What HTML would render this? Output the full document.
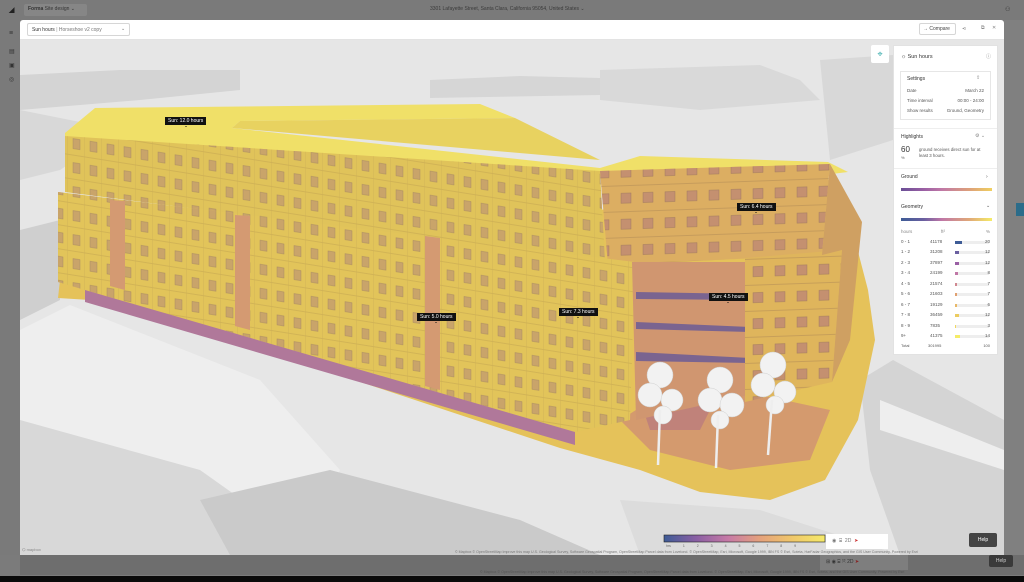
<!DOCTYPE html>
<html><head><meta charset="utf-8"><style>
*{margin:0;padding:0;box-sizing:border-box}
body{width:1024px;height:582px;overflow:hidden;background:#7b7b7b;font-family:"Liberation Sans",sans-serif;position:relative}
.abs{position:absolute}
.t{font-size:5px;color:#555;white-space:nowrap}
.lbl{position:absolute;background:#111;color:#fff;font-size:5px;padding:1px 3px;white-space:nowrap}
.lbl:after{content:"";position:absolute;left:50%;bottom:-2px;margin-left:-1px;border:1.5px solid transparent;border-top-color:#111;border-bottom:0}
#panel{left:893px;top:45px;width:105px;height:310px;background:#fff;border:1px solid #e2e2e2}
.row{position:absolute;left:7px;right:7px;height:9px;font-size:4.5px;color:#555}
.row span{position:absolute;top:0}
.bar{position:absolute;left:54px;top:2px;width:34px;height:3px;background:#eee}
.bar i{display:block;height:3px}
</style></head><body>
<div class="abs" style="left:0;top:0;width:1024px;height:20px;background:#7a7a7a"></div>
<div class="abs t" style="left:9px;top:6px;font-size:7px;color:#222;font-weight:bold">◢</div>
<div class="abs" style="left:24px;top:4px;width:63px;height:12px;background:#868686;border-radius:2px"></div>
<div class="abs t" style="left:28px;top:6px;color:#333;font-size:5px"><b>Forma</b> Site design ⌄</div>
<div class="abs t" style="left:430px;top:6px;color:#3a3a3a;font-size:5px">3301 Lafayette Street, Santa Clara, California 95054, United States ⌄</div>
<div class="abs t" style="left:1005px;top:6px;color:#333;font-size:6px">⚇</div>
<div class="abs" style="left:0;top:20px;width:20px;height:535px;background:#7a7a7a"></div>
<div class="abs t" style="left:9px;top:30px;color:#333;font-size:7px">≡</div>
<div class="abs t" style="left:9px;top:48px;color:#333;font-size:6px">▤</div>
<div class="abs t" style="left:9px;top:62px;color:#333;font-size:6px">▣</div>
<div class="abs t" style="left:9px;top:76px;color:#333;font-size:6px">◎</div>
<div class="abs" style="left:1004px;top:20px;width:20px;height:535px;background:#808080"></div>
<div class="abs" style="left:1016px;top:203px;width:8px;height:13px;background:#2b6c8a"></div>
<div class="abs" style="left:20px;top:20px;width:984px;height:20px;background:#fff;border-bottom:1px solid #e3e3e3;border-radius:3px 3px 0 0"></div>
<div class="abs" style="left:27px;top:23px;width:103px;height:13px;border:1px solid #d6d6d6;border-radius:2px"></div>
<div class="abs t" style="left:32px;top:27px;color:#333">Sun hours <span style="color:#999">|</span> <span style="color:#777">Horseshoe v2 copy</span></div>
<div class="abs t" style="left:121px;top:26px;color:#777">⌄</div>
<div class="abs" style="left:919px;top:23px;width:37px;height:12px;border:1px solid #d6d6d6;border-radius:2px"></div>
<div class="abs t" style="left:923px;top:26px;color:#444">→ Compare</div>
<div class="abs t" style="left:962px;top:26px;color:#666">⋖</div>
<div class="abs t" style="left:981px;top:25px;color:#888">⧉</div>
<div class="abs t" style="left:992px;top:25px;color:#888">✕</div>
<svg class="abs" style="left:0;top:0" width="1024" height="582" viewBox="0 0 1024 582">
<defs>
<clipPath id="c"><rect x="20" y="40" width="984" height="515"/></clipPath>
<pattern id="w" width="17" height="24" patternUnits="userSpaceOnUse" patternTransform="skewY(9)">
<rect x="5" y="7" width="7" height="10" fill="#c9a46a" stroke="#a88a62" stroke-width=".5"/><line x1="0" y1="23.5" x2="17" y2="23.5" stroke="#c2a452" stroke-width=".5"/><line x1="16.5" y1="0" x2="16.5" y2="24" stroke="#ccb055" stroke-width=".4"/>
</pattern>
<pattern id="w2" width="22" height="26" patternUnits="userSpaceOnUse" patternTransform="skewY(-2)">
<rect x="5" y="7" width="10" height="10" fill="#c49070" stroke="#a07a60" stroke-width=".5"/><line x1="0" y1="25.5" x2="22" y2="25.5" stroke="#b08a55" stroke-width=".5"/>
</pattern>
</defs>
<g clip-path="url(#c)">
<rect x="20" y="40" width="984" height="515" fill="#e6e6e6"/>
<polygon points="20,75 120,70 240,70 240,90 140,100 20,110" fill="#d4d4d4"/>
<polygon points="430,80 520,76 600,78 600,95 430,98" fill="#d6d6d6"/>
<polygon points="600,70 760,65 800,80 820,100 700,110 600,100" fill="#d9d9d9"/>
<polygon points="820,60 893,55 893,140 830,160" fill="#d8d8d8"/>
<polygon points="20,110 120,130 60,170 20,180" fill="#d8d8d8"/>
<polygon points="20,230 60,220 60,300 20,320" fill="#cfcfcf"/>
<polygon points="20,330 70,305 260,380 340,470 300,555 20,555" fill="#eeeeee"/>
<polygon points="20,420 200,470 320,555 20,555" fill="#d8d8d8"/>
<polygon points="200,500 330,470 520,520 600,555 230,555" fill="#cacaca"/>
<polygon points="860,380 893,360 1004,420 1004,555 900,555 870,470" fill="#d4d4d4"/>
<polygon points="880,400 1004,450 1004,470 880,430" fill="#eeeeee"/>
<polygon points="620,500 760,510 900,555 640,555" fill="#dcdcdc"/>
<polygon points="58,298 90,300 300,362 560,448 640,470 700,492 770,500 825,480 858,420 875,340 868,290 855,240 840,200 830,180 60,280" fill="#e5c25a"/>
<polygon points="620,420 660,395 760,395 830,410 810,460 730,470 650,450" fill="#d49a6e"/>
<polygon points="640,400 720,390 700,430 650,430" fill="#c0827a"/>
<polygon points="65,133 95,108 480,104 515,118 240,121 232,128 600,168 640,156 828,162 848,172 815,176 640,176 600,176 65,140" fill="#f0e068"/>
<polygon points="240,121 515,118 600,160 232,128" fill="#e8d260"/>
<polygon points="65,136 600,171 605,262 65,192" fill="#e0c35a"/>
<polygon points="65,136 600,171 605,262 65,192" fill="url(#w)"/>
<polygon points="600,171 830,164 822,255 608,265" fill="#dcae62"/>
<polygon points="600,171 830,164 822,255 608,265" fill="url(#w2)"/>
<polygon points="58,192 635,262 630,420 575,432 85,290 58,282" fill="#e2c45a"/>
<polygon points="58,192 635,262 630,420 575,432 85,290 58,282" fill="url(#w)"/>
<polygon points="110,200 125,201 125,290 110,286" fill="#d49a72"/>
<polygon points="235,215 250,216 250,330 235,326" fill="#d49a72"/>
<polygon points="425,236 440,238 440,390 425,386" fill="#d49a72"/>
<polygon points="85,290 575,432 575,445 85,302" fill="#b0789a"/>
<polygon points="632,262 752,262 748,395 636,420" fill="#d09670"/>
<polygon points="636,292 750,294 750,300 636,299" fill="#7a6490"/>
<polygon points="636,322 750,327 750,332 636,329" fill="#7a6490"/>
<polygon points="636,352 750,358 750,363 636,361" fill="#7a6490"/>
<polygon points="745,258 842,250 832,382 745,402" fill="#dfb55c"/>
<polygon points="745,258 842,250 832,382 745,402" fill="url(#w2)"/>
<polygon points="830,164 862,222 850,340 832,382 842,250 822,255" fill="#cfa062"/>
<g fill="#f2f2f2" stroke="#cfcfcf" stroke-width=".5">
<circle cx="660" cy="375" r="13"/><circle cx="650" cy="395" r="12"/><circle cx="672" cy="400" r="11"/><circle cx="663" cy="415" r="9"/>
<circle cx="720" cy="380" r="13"/><circle cx="710" cy="400" r="12"/><circle cx="732" cy="405" r="12"/><circle cx="720" cy="420" r="9"/>
<circle cx="773" cy="365" r="13"/><circle cx="763" cy="385" r="12"/><circle cx="785" cy="392" r="11"/><circle cx="775" cy="405" r="9"/>
</g>
<g stroke="#eee" stroke-width="2.5"><line x1="660" y1="410" x2="658" y2="465"/><line x1="718" y1="415" x2="716" y2="468"/><line x1="772" y1="400" x2="768" y2="455"/></g>
</g>
<defs><linearGradient id="lg"><stop offset="0" stop-color="#3e5c96"/><stop offset=".2" stop-color="#8a5fa4"/><stop offset=".4" stop-color="#c77aa6"/><stop offset=".6" stop-color="#e5a27c"/><stop offset=".8" stop-color="#f0c86a"/><stop offset="1" stop-color="#f5ea6a"/></linearGradient></defs>
<rect x="664" y="535" width="161" height="7" fill="url(#lg)" stroke="#222" stroke-width=".6"/>
<rect x="826" y="534" width="62" height="15" fill="#fff"/>
</svg>
<div class="abs t" style="left:666px;top:544px;font-size:3.5px;color:#666;word-spacing:11px">hrs 1 2 3 4 5 6 7 8 9</div>
<div class="abs t" style="left:832px;top:538px;color:#777;font-size:5px">◉ &nbsp;⌸ &nbsp;2D &nbsp;<span style="color:#c33">➤</span></div>
<div class="abs" style="left:969px;top:533px;width:28px;height:14px;background:#444;border-radius:2px;color:#fff;font-size:5px;text-align:center;line-height:14px">Help</div>
<div class="abs t" style="left:22px;top:547px;color:#888;font-size:4px">⌬ mapbox</div>
<div class="abs t" style="left:455px;top:550px;color:#777;font-size:3.6px">© Mapbox © OpenStreetMap Improve this map U.S. Geological Survey, Software Geospatial Program, OpenStreetMap Parcel data from Lovelond. © OpenStreetMap, Esri, Microsoft, Google 1999, IBN FS © Esri, Soteta, HarFadar Geographics, and the GIS User Community. Powered by Esri</div>
<div class="abs" style="left:20px;top:555px;width:1004px;height:20px;background:#6e6e6e"></div>
<div class="abs" style="left:820px;top:555px;width:88px;height:15px;background:#7e7e7e"></div>
<div class="abs t" style="left:826px;top:559px;color:#333;font-size:5px">⊞ ◉ ⌸ ⤧ 2D <span style="color:#822">➤</span></div>
<div class="abs" style="left:989px;top:555px;width:24px;height:12px;background:#3a3a3a;border-radius:2px;color:#ccc;font-size:5px;text-align:center;line-height:12px">Help</div>
<div class="abs t" style="left:480px;top:570px;color:#555;font-size:3.6px">© Mapbox © OpenStreetMap Improve this map U.S. Geological Survey, Software Geospatial Program, OpenStreetMap Parcel data from Lovelond. © OpenStreetMap, Esri, Microsoft, Google 1999, IBN FS © Esri, Soteta, and the GIS User Community. Powered by Esri</div>
<div class="abs" style="left:0;top:576px;width:1024px;height:6px;background:#0a0a0a"></div>
<div class="lbl" style="left:165px;top:117px">Sun: 12.0 hours</div>
<div class="lbl" style="left:737px;top:203px">Sun: 6.4 hours</div>
<div class="lbl" style="left:709px;top:293px">Sun: 4.5 hours</div>
<div class="lbl" style="left:559px;top:308px">Sun: 7.3 hours</div>
<div class="lbl" style="left:417px;top:313px">Sun: 5.0 hours</div>
<div class="abs" style="left:871px;top:45px;width:18px;height:18px;background:#fff;border-radius:2px;color:#3aa;font-size:9px;text-align:center;line-height:18px">⌖</div>
<div class="abs" id="panel">
<div class="t abs" style="left:7px;top:8px;color:#333;font-size:5.5px">☼ Sun hours</div>
<div class="t abs" style="left:92px;top:7px;color:#888">ⓘ</div>
<div class="abs" style="left:6px;top:25px;width:91px;height:49px;border:1px solid #e6e6e6"></div>
<div class="t abs" style="left:13px;top:30px;color:#333">Settings</div>
<div class="t abs" style="left:82px;top:29px;color:#888">⇪</div>
<div class="t abs" style="left:13px;top:42px;font-size:4.5px">Date</div><div class="t abs" style="right:13px;top:42px;font-size:4.5px">March 22</div>
<div class="t abs" style="left:13px;top:52px;font-size:4.5px">Time interval</div><div class="t abs" style="right:13px;top:52px;font-size:4.5px">00:00 - 24:00</div>
<div class="t abs" style="left:13px;top:62px;font-size:4.5px">Show results</div><div class="t abs" style="right:13px;top:62px;font-size:4.5px">Ground, Geometry</div>
<div class="abs" style="left:0;top:82px;width:103px;border-top:1px solid #eee"></div>
<div class="t abs" style="left:7px;top:88px;color:#333">Highlights</div>
<div class="t abs" style="left:81px;top:87px;color:#888">⚙ ⌄</div>
<div class="abs" style="left:7px;top:99px;font-size:8px;color:#333">60</div>
<div class="t abs" style="left:7px;top:109px;font-size:4px">%</div>
<div class="t abs" style="left:25px;top:101px;font-size:4.3px;white-space:normal;width:70px;line-height:6px">ground receives direct sun for at least 3 hours.</div>
<div class="abs" style="left:0;top:122px;width:103px;border-top:1px solid #eee"></div>
<div class="t abs" style="left:7px;top:128px;color:#333">Ground</div><div class="t abs" style="left:92px;top:128px">›</div>
<div class="abs" style="left:7px;top:142px;width:91px;height:3px;background:linear-gradient(90deg,#6a4f96,#9a5fa4 25%,#c078a6 45%,#dda07a 75%,#f0d060)"></div>
<div class="t abs" style="left:7px;top:158px;color:#333">Geometry</div><div class="t abs" style="left:92px;top:157px">⌄</div>
<div class="abs" style="left:7px;top:172px;width:91px;height:3px;background:linear-gradient(90deg,#3e5c96,#6a5fa0 25%,#c077a6 45%,#e0a878 75%,#f5ec68)"></div>
<div class="row" style="top:183px;color:#888"><span style="left:0">hours</span><span style="left:40px">ft²</span><span style="right:0">%</span></div>
<div class="row" style="top:193px"><span>0 - 1</span><span style="left:29px">41178</span><div class="bar"><i style="width:7px;background:#3e5c96"></i></div><span style="right:0">20</span></div>
<div class="row" style="top:203px"><span>1 - 2</span><span style="left:29px">31208</span><div class="bar"><i style="width:4px;background:#6a5fa0"></i></div><span style="right:0">12</span></div>
<div class="row" style="top:214px"><span>2 - 3</span><span style="left:29px">37897</span><div class="bar"><i style="width:4px;background:#9a5fa4"></i></div><span style="right:0">12</span></div>
<div class="row" style="top:224px"><span>3 - 4</span><span style="left:29px">24199</span><div class="bar"><i style="width:3px;background:#c077a6"></i></div><span style="right:0">8</span></div>
<div class="row" style="top:235px"><span>4 - 5</span><span style="left:29px">21574</span><div class="bar"><i style="width:2px;background:#d08890"></i></div><span style="right:0">7</span></div>
<div class="row" style="top:245px"><span>5 - 6</span><span style="left:29px">21603</span><div class="bar"><i style="width:2px;background:#e0a070"></i></div><span style="right:0">7</span></div>
<div class="row" style="top:256px"><span>6 - 7</span><span style="left:29px">19129</span><div class="bar"><i style="width:2px;background:#e8b868"></i></div><span style="right:0">6</span></div>
<div class="row" style="top:266px"><span>7 - 8</span><span style="left:29px">36459</span><div class="bar"><i style="width:4px;background:#eccc60"></i></div><span style="right:0">12</span></div>
<div class="row" style="top:277px"><span>8 - 9</span><span style="left:29px">7835</span><div class="bar"><i style="width:1px;background:#f0d860"></i></div><span style="right:0">3</span></div>
<div class="row" style="top:287px"><span>9+</span><span style="left:29px">41375</span><div class="bar"><i style="width:5px;background:#f5ec68"></i></div><span style="right:0">14</span></div>
<div class="row" style="top:297px;font-size:4px"><span>Total</span><span style="left:27px">301995</span><span style="right:0">100</span></div>
</div>
</body></html>
